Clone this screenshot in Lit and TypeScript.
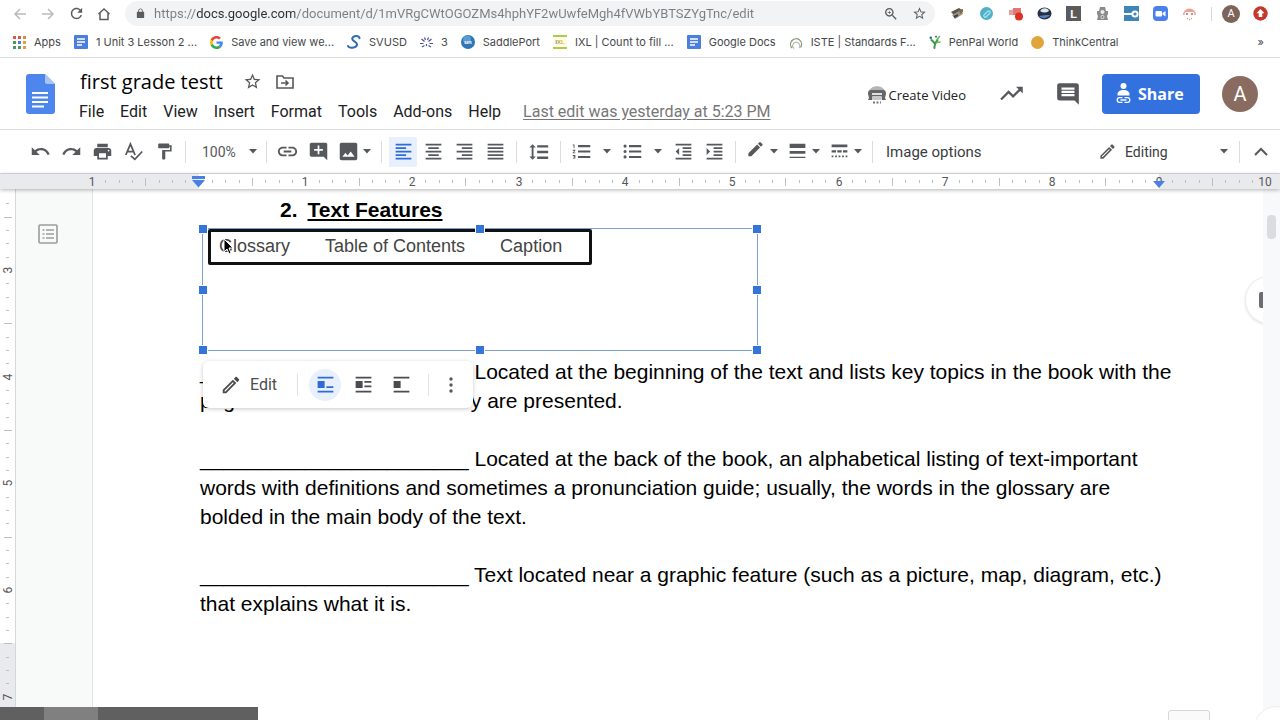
import { LitElement, html, svg, css } from "lit";
import { customElement } from "lit/decorators.js";

const P = {
  undo: "M12.5 8c-2.65 0-5.05.99-6.9 2.6L2 7v9h9l-3.62-3.62c1.39-1.16 3.16-1.88 5.12-1.88 3.54 0 6.55 2.31 7.6 5.5l2.37-.78C21.08 11.03 17.15 8 12.5 8z",
  redo: "M18.4 10.6C16.55 8.99 14.15 8 11.5 8c-4.65 0-8.58 3.03-9.96 7.22L3.9 16c1.05-3.19 4.05-5.5 7.6-5.5 1.95 0 3.73.72 5.12 1.88L13 16h9V7l-3.6 3.6z",
  print: "M19 8H5c-1.66 0-3 1.34-3 3v6h4v4h12v-4h4v-6c0-1.66-1.34-3-3-3zm-3 11H8v-5h8v5zm3-7c-.55 0-1-.45-1-1s.45-1 1-1 1 .45 1 1-.45 1-1 1zm-1-9H6v4h12V3z",
  paint: "M18 4V3c0-.55-.45-1-1-1H5c-.55 0-1 .45-1 1v4c0 .55.45 1 1 1h12c.55 0 1-.45 1-1V6h1v4H9v11c0 .55.45 1 1 1h2c.55 0 1-.45 1-1v-9h8V4h-3z",
  link: "M3.9 12c0-1.71 1.39-3.1 3.1-3.1h4V7H7c-2.76 0-5 2.24-5 5s2.24 5 5 5h4v-1.9H7c-1.71 0-3.1-1.39-3.1-3.1zM8 13h8v-2H8v2zm9-6h-4v1.9h4c1.71 0 3.1 1.39 3.1 3.1s-1.39 3.1-3.1 3.1h-4V17h4c2.76 0 5-2.24 5-5s-2.24-5-5-5z",
  addComment: "M22 4c0-1.100-.9-2-2-2H4c-1.100 0-2 .9-2 2v12c0 1.100.9 2 2 2h14l4 4V4zM17 11h-4v4h-2v-4H7V9h4V5h2v4h4v2z",
  image: "M22 20V4c0-1.100-.9-2-2-2H4c-1.100 0-2 .9-2 2v16c0 1.100.9 2 2 2h16c1.100 0 2-.9 2-2zM8.500 13.500l2.500 3.010L14.500 12l4.500 6H5l3.500-4.500z",
  alignLeft: "M3 3h18v2H3zM3 7h12v2H3zM3 11h18v2H3zM3 15h12v2H3zM3 19h18v2H3z",
  alignCenter: "M3 3h18v2H3zM6 7h12v2H6zM3 11h18v2H3zM6 15h12v2H6zM3 19h18v2H3z",
  alignRight: "M3 3h18v2H3zM9 7h12v2H9zM3 11h18v2H3zM9 15h12v2H9zM3 19h18v2H3z",
  justify: "M3 3h18v2H3zM3 7h18v2H3zM3 11h18v2H3zM3 15h18v2H3zM3 19h18v2H3z",
  spacing: "M6 7h2.500L5 3.500 1.500 7H4v10H1.500L5 20.500 8.500 17H6V7zm4-2.500v2.500h12V4.500H10zm0 15h12V17H10v2.500zm0-6.250h12v-2.500H10v2.500z",
  numbered: "M2 17h2v.5H3v1h1v.5H2v1h3v-4H2v1zm1-9h1V4H2v1h1v3zm-1 3h1.800L2 13.100v.9h3v-1H3.200L5 10.900V10H2v1zM8 4.500V7h14V4.500H8zm0 15h14V17H8v2.500zm0-6.250h14v-2.500H8v2.500z",
  bullets: "M3.500 10.200a1.800 1.800 0 1 0 0 3.600 1.800 1.800 0 0 0 0-3.600zm0-6.200a1.800 1.800 0 1 0 0 3.600 1.800 1.800 0 0 0 0-3.600zm0 12.400a1.800 1.800 0 1 0 0 3.600 1.800 1.800 0 0 0 0-3.600zM8 19.500h14V17H8v2.500zm0-6.250h14v-2.500H8v2.500zM8 4.500V7h14V4.500H8z",
  outdent: "M11 17h10v-2H11v2zm-8-5l4 4V8l-4 4zm0 9h18v-2H3v2zM3 3v2h18V3H3zm8 6h10V7H11v2zm0 4h10v-2H11v2z",
  indent: "M3 21h18v-2H3v2zM3 8v8l4-4-4-4zm8 9h10v-2H11v2zM3 3v2h18V3H3zm8 6h10V7H11v2zm0 4h10v-2H11v2z",
  pencil: "M3 14.250V18h3.750L17.810 6.940l-3.750-3.750L3 14.250zM20.710 4.040c.39-.39.39-1.020 0-1.410l-2.340-2.340c-.39-.39-1.020-.39-1.410 0l-1.830 1.830 3.750 3.750 1.830-1.830z",
  weight: "M3 3h18v5H3zM3 11.500h18v3H3zM3 18h18v1.500H3z",
  dash: "M3 4h18v3H3zM3 10.500h5v2.500H3zM9.500 10.500h5v2.500h-5zM16 10.500h5v2.500h-5zM3 16.500h2v2H3zM7 16.500h2v2H7zM11 16.500h2v2h-2zM15 16.500h2v2h-2zM19 16.500h2v2h-2z",
  edit: "M14.060 9.020l.92.92L5.920 19H5v-.92l9.060-9.060M17.660 3c-.25 0-.51.1-.7.29l-1.830 1.830 3.750 3.750 1.830-1.830c.39-.39.39-1.020 0-1.410l-2.340-2.340c-.2-.2-.45-.29-.71-.29zm-3.600 3.190L3 17.250V21h3.750L17.810 9.940l-3.750-3.750z",
  star: "M22 9.240l-7.190-.62L12 2 9.190 8.630 2 9.240l5.460 4.730L5.820 21 12 17.270 18.180 21l-1.630-7.030L22 9.240zM12 15.400l-3.760 2.270 1-4.280-3.320-2.880 4.380-.38L12 6.100l1.710 4.040 4.380.38-3.320 2.880 1 4.280L12 15.400z",
  trend: "M16 6l2.290 2.290-4.880 4.880-4-4L2 16.590 3.410 18l6-6 4 4 6.300-6.290L22 12V6z",
  comment: "M22 4c0-1.100-.9-2-2-2H4c-1.100 0-2 .9-2 2v12c0 1.100.9 2 2 2h14l4 4V4zM18 14H6v-2h12v2zm0-3H6V9h12v2zm0-3H6V6h12v2z",
  reload: "M17.650 6.350C16.200 4.900 14.210 4 12 4c-4.420 0-7.990 3.580-7.990 8s3.570 8 7.990 8c3.730 0 6.840-2.550 7.730-6h-2.080c-.82 2.330-3.040 4-5.650 4-3.310 0-6-2.690-6-6s2.690-6 6-6c1.660 0 3.140.69 4.220 1.780L13 11h7V4l-2.350 2.350z",
  lock: "M18 8h-1V6c0-2.760-2.240-5-5-5S7 3.240 7 6v2H6c-1.100 0-2 .9-2 2v10c0 1.100.9 2 2 2h12c1.100 0 2-.9 2-2V10c0-1.100-.9-2-2-2zm-2.900 0H8.900V6c0-1.710 1.390-3.100 3.100-3.100 1.710 0 3.100 1.390 3.100 3.100v2z",
  zoom: "M15.500 14h-.79l-.28-.27C15.410 12.590 16 11.110 16 9.500 16 5.910 13.090 3 9.500 3S3 5.910 3 9.500 5.910 16 9.500 16c1.610 0 3.090-.59 4.230-1.570l.27.28v.79l5 4.990L20.490 19l-4.990-5zm-6 0C7.010 14 5 11.990 5 9.500S7.010 5 9.500 5 14 7.010 14 9.500 11.990 14 9.500 14zm2.500-4h-2v2H9v-2H7V9h2V7h1v2h2v1z",
  wrapInline: "M3 3h18v2H3zM3 8h8v8H3zM13 14h8v2h-8zM3 19h18v2H3z",
  wrapText: "M3 3h18v2H3zM3 8h8v8H3zM13 8h8v2h-8zM13 13h8v2h-8zM3 19h18v2H3z",
  wrapBreak: "M3 3h18v2H3zM3 8h8v8H3zM3 19h18v2H3z",
};

const icon = (d: string, size = 21) =>
  html`<svg width=${size} height=${size} viewBox="0 0 24 24" fill="currentColor" aria-hidden="true"><path d=${d}></path></svg>`;
const caret = html`<svg width="8" height="5" viewBox="0 0 8 5" fill="currentColor" aria-hidden="true"><path d="M0 0h8L4 4.500z"></path></svg>`;
const spell = html`<svg width="21" height="21" viewBox="0 0 24 24" fill="none" stroke="currentColor" stroke-width="2" aria-hidden="true"><path d="M3.200 16L8.500 3.500 13.800 16M5 12h7M9 17l4.500 4L22 12"></path></svg>`;

const docsIcon = html`<svg width="14" height="14" viewBox="0 0 14 14"><rect width="14" height="14" rx="1" fill="#4a7fe0"></rect><path d="M3 4h8M3 7h8M3 10h5" stroke="#fff" stroke-width="1.500"></path></svg>`;
const appsIcon = html`<svg width="13" height="13" viewBox="0 0 13 13">${[
  ["#d9584a", 0, 0], ["#d9584a", 5, 0], ["#d98b4a", 10, 0],
  ["#4d9a5f", 0, 5], ["#4a7fe0", 5, 5], ["#e0a03c", 10, 5],
  ["#4d9a5f", 0, 10], ["#4d9a5f", 5, 10], ["#e0a03c", 10, 10],
].map(([c, x, y]) => svg`<rect x=${x} y=${y} width="3" height="3" fill=${c}></rect>`)}</svg>`;
const gIcon = html`<svg width="13" height="13" viewBox="0 0 48 48"><path fill="#EA4335" d="M24 9.500c3.540 0 6.710 1.220 9.210 3.600l6.850-6.850C35.900 2.380 30.470 0 24 0 14.620 0 6.510 5.380 2.560 13.220l7.980 6.190C12.430 13.720 17.740 9.500 24 9.500z"></path><path fill="#4285F4" d="M46.980 24.550c0-1.570-.15-3.090-.38-4.550H24v9.020h12.940c-.58 2.960-2.260 5.480-4.780 7.180l7.730 6c4.510-4.180 7.090-10.360 7.090-17.650z"></path><path fill="#FBBC05" d="M10.530 28.590c-.48-1.450-.76-2.990-.76-4.590s.27-3.140.76-4.590l-7.980-6.190C.92 16.460 0 20.120 0 24c0 3.880.92 7.540 2.560 10.780l7.970-6.190z"></path><path fill="#34A853" d="M24 48c6.480 0 11.930-2.130 15.890-5.810l-7.730-6c-2.150 1.450-4.920 2.300-8.160 2.300-6.260 0-11.570-4.220-13.470-9.910l-7.980 6.190C6.510 42.620 14.620 48 24 48z"></path></svg>`;
const sIcon = html`<svg width="14" height="14" viewBox="0 0 14 14" fill="none" stroke="#2f6cb3" stroke-linecap="round"><path d="M12.500 3.200C12.600.3 6 .2 5.200 3.600 4.700 6 10.600 6.800 10 9.800 9.300 13.300 2 13.700 1 11" stroke-width="2"></path></svg>`;
const loomIcon = html`<svg width="13" height="13" viewBox="0 0 13 13" fill="none" stroke="#4a4f9c" stroke-width="1.200"><path d="M0 7.500h3.500M9.500 7.500H13M1.500 3l3 2.500M11.500 3l-3 2.500M4.500 1.500l1 2.500M8.500 1.500l-1 2.500M2 11l2.500-1.500M11 11L8.500 9.500M6.500 8v2"></path></svg>`;
const saddleIcon = html`<svg width="14" height="14" viewBox="0 0 14 14"><circle cx="7" cy="7" r="7" fill="#2f76b5"></circle><circle cx="6" cy="4.500" r="4" fill="#5a9bd0"></circle><text class="tiny" x="7" y="9" text-anchor="middle" fill="#fff">un</text></svg>`;
const ixlIcon = html`<svg width="14" height="14" viewBox="0 0 14 14"><rect width="14" height="14" fill="#fdfbe8"></rect><path d="M0 1h14M0 13h14" stroke="#a9cf4a" stroke-width="2"></path><text class="tiny" x="7" y="9" text-anchor="middle"><tspan fill="#3a9fd0">I</tspan><tspan fill="#e8952f">X</tspan><tspan fill="#e0b52f">L</tspan></text></svg>`;
const isteIcon = html`<svg width="14" height="14" viewBox="0 0 14 14" fill="none"><path d="M3 13A5.500 5.500 0 1 1 11.500 12.500" stroke="#8d9a7d" stroke-width="1.300"></path><path d="M5 13.500A3.500 3.500 0 1 1 10 13" stroke="#b5bda8" stroke-width="1.200"></path></svg>`;
const penIcon = html`<svg width="12" height="14" viewBox="0 0 12 14" fill="none" stroke-linecap="round"><path d="M5.500 13c-.5-3 .5-5 3-8M5.500 8L2.500 5" stroke="#3f9a4c" stroke-width="2"></path><path d="M8 4.500L10.500 1.500M8 7.500l3-.5" stroke="#69b85a" stroke-width="1.600"></path><circle cx="1.800" cy="2.800" r="1.300" fill="#2c6f9c"></circle><circle cx="7" cy="1.800" r="1" fill="#347d52"></circle></svg>`;
const thinkIcon = html`<svg width="13" height="13" viewBox="0 0 13 13"><circle cx="6.500" cy="6.500" r="6.500" fill="#e0a53a"></circle></svg>`;

const bookmarks = [
  { i: appsIcon, t: "Apps" },
  { i: docsIcon, t: "1 Unit 3 Lesson 2 ..." },
  { i: gIcon, t: "Save and view we..." },
  { i: sIcon, t: "SVUSD" },
  { i: loomIcon, t: "3" },
  { i: saddleIcon, t: "SaddlePort" },
  { i: ixlIcon, t: "IXL | Count to fill ..." },
  { i: docsIcon, t: "Google Docs" },
  { i: isteIcon, t: "ISTE | Standards F..." },
  { i: penIcon, t: "PenPal World" },
  { i: thinkIcon, t: "ThinkCentral" },
];

const ext = (label: string, body: unknown) =>
  html`<button class="ext" aria-label=${label}><svg width="15" height="15" viewBox="0 0 15 15">${body}</svg></button>`;

const extensions = [
  ext("Wallet", svg`<path d="M1 6l8-4 3 2-8 5z" fill="#5b554a"></path><path d="M2 9l9-5 2 4-8 5z" fill="#9a9288"></path><path d="M9 4l4-1v3l-3 2z" fill="#8a6a3c"></path><path d="M4 11l4-2" stroke="#3f444a" stroke-width="2"></path>`),
  ext("Clip", svg`<circle cx="7.500" cy="7.500" r="6.500" fill="#4fb0c8"></circle><path d="M5 9l4-4a1.500 1.500 0 0 1 2 2l-4 4a1.500 1.500 0 0 1-2-2" fill="none" stroke="#a5e2ee" stroke-width="1.300"></path>`),
  ext("Screen recorder", svg`<path d="M1 4h3l2-2v7H1z" fill="#e5a09c"></path><rect x="5" y="2" width="8" height="7" fill="#e27871"></rect><circle cx="11" cy="10.500" r="4" fill="#e02f24"></circle>`),
  ext("Globe", svg`<ellipse cx="7.500" cy="7.500" rx="7" ry="6" fill="#27303f"></ellipse><path d="M3 5c3-4 8-3 9 0-3 2-6 2-9 0z" fill="#dfe7ef"></path><path d="M2 10c3 3 8 3 11-1-4 0-6 0-11 1z" fill="#4b83c8"></path>`),
  ext("L", svg`<rect width="15" height="15" fill="#5b5b5b"></rect><text class="ell" x="7.500" y="11.500" text-anchor="middle" fill="#fff">L</text>`),
  ext("Robot", svg`<path d="M5 1h5l1 4h2v3l-1 2 1 4H2l1-4-1-2V5h2z" fill="#8b8b8b"></path><circle cx="7.500" cy="6" r="2" fill="#eee"></circle><circle cx="7.500" cy="11" r="2" fill="#ddd"></circle><circle cx="7.500" cy="11" r="1" fill="#777"></circle>`),
  ext("Key", svg`<rect width="15" height="15" fill="#3f86b8"></rect><path d="M0 8h9" stroke="#fff" stroke-width="2"></path><circle cx="11" cy="8" r="2.600" fill="none" stroke="#fff" stroke-width="2"></circle>`),
  ext("Video meeting", svg`<rect width="15" height="15" rx="4" fill="#4a80ee"></rect><rect x="2.500" y="5" width="6.500" height="5.500" rx="1" fill="#fff"></rect><path d="M9.500 7l3-2v5.500l-3-2z" fill="#fff"></path>`),
  ext("Screencast", svg`<path d="M1 9a6.500 6.500 0 1 1 13 0z" fill="#eaa395"></path><rect x="2.500" y="6" width="10" height="4" rx="2" fill="#fff"></rect><path d="M4 8h2M9 8h2" stroke="#b86b5e" stroke-width="1.500"></path><path d="M5 12.500h1M7 13.500h1M9 12.500h1" stroke="#e2998a" stroke-width="1.400"></path>`),
];

const INCH = 320 / 3;

const hTicks = () => {
  const out = [];
  for (let i = 0; i <= 88; i++) {
    const x = Math.round(92 + (i * INCH) / 8);
    const n = Math.abs(i / 8 - 1);
    if (i % 8 === 0) {
      if (n !== 0) out.push(svg`<text class="num" x=${x} y="12" text-anchor="middle">${n}</text>`);
    } else if (i % 4 === 0) out.push(svg`<rect x=${x} y="4" width="1" height="8" fill="#bcbfc3"></rect>`);
    else out.push(svg`<rect x=${x} y="6" width="1" height="3" fill="#bcbfc3"></rect>`);
  }
  return out;
};
const vTicks = () => {
  const out = [];
  for (let i = -5; i <= 34; i++) {
    const y = Math.round(81 + (i * INCH) / 8);
    if (i % 8 === 0) out.push(svg`<text class="num" transform=${`translate(12 ${y}) rotate(-90)`} text-anchor="middle">${3 + i / 8}</text>`);
    else if (i % 4 === 0) out.push(svg`<rect x="4" y=${y} width="8" height="1" fill="#bcbfc3"></rect>`);
    else out.push(svg`<rect x="6" y=${y} width="3" height="1" fill="#bcbfc3"></rect>`);
  }
  return out;
};

const tool = (label: string, d: string, size = 21) =>
  html`<button class="tool" aria-label=${label}>${icon(d, size)}</button>`;
const combo = (label: string, d: string, kind: string, size = 21) =>
  html`<button class="combo ${kind}" aria-label=${label}><span class="face">${icon(d, size)}</span><span class="drop">${caret}</span></button>`;
const sep = html`<span class="sep"></span>`;

const BLANK = "_".repeat(23);

@customElement("app-root")
export class AppRoot extends LitElement {
  static styles = css`
    :host { display: flex; flex-direction: column; height: 100vh; overflow: hidden; position: relative; background: #fff; color: #000; font-family: Roboto, "Liberation Sans", sans-serif; }
    * { box-sizing: border-box; }
    button, input, select { font: inherit; color: inherit; border: 0; background: none; padding: 0; margin: 0; outline: 0; }
    svg { display: block; flex: none; }
    .tiny { font: bold 6px "Liberation Sans", sans-serif; }
    .ell { font: bold 11px "Liberation Sans", sans-serif; }

    .nav { display: flex; align-items: center; height: 27px; padding: 0 12px 0 6px; flex: none; color: #5a5d60; }
    .navbtn { width: 28px; height: 24px; display: flex; align-items: center; justify-content: center; }
    .navbtn.off { color: #b9bbbd; }
    .omni { flex: 1; display: flex; align-items: center; gap: 8px; height: 25px; margin-left: 7px; padding: 0 6px 0 10px; border-radius: 13px; background: #f1f3f4; }
    .url { flex: 1; min-width: 0; height: 25px; font-size: 13px; color: transparent; background: linear-gradient(90deg, #7b7e81 42px, #2b2d30 42px, #2b2d30 141px, #7b7e81 141px); -webkit-background-clip: text; background-clip: text; }
    .omnibtn { width: 20px; height: 20px; display: flex; align-items: center; justify-content: center; }
    .omniend { display: flex; gap: 8px; }
    .exts { display: flex; align-items: center; margin-left: 8px; }
    .ext { width: 29px; height: 20px; display: flex; align-items: center; justify-content: center; }
    .navline { width: 1px; height: 14px; margin: 0 10px 0 7px; background: #d5d7d9; }
    .mini { width: 18px; height: 18px; border-radius: 50%; background: #7d6459; color: #fff; font-size: 11px; line-height: 18px; text-align: center; }
    .alert { margin-left: 13px; }

    .marks { display: flex; align-items: center; gap: 13px; height: 31px; padding: 0 16px 0 13px; flex: none; border-bottom: 1px solid #dcdcdc; font: 11px/16px Inter, sans-serif; color: #45484b; }
    .mark { display: flex; align-items: center; gap: 8px; color: inherit; text-decoration: none; white-space: nowrap; }
    .more { margin-left: auto; }

    .head { display: flex; align-items: center; height: 72px; padding: 0 22px 0 25px; flex: none; border-bottom: 1px solid #dadce0; }
    .logo { margin-top: 2px; }
    .titles { display: flex; flex-direction: column; margin-left: 24px; padding-top: 4px; gap: 4px; }
    .row1 { display: flex; align-items: center; gap: 14px; color: #5f6368; height: 28px; }
    .title { width: 150px; height: 28px; padding-left: 1px; font: 20px/28px "Open Sans", sans-serif; color: #000; }
    .plain { display: flex; align-items: center; justify-content: center; color: #56585b; }
    .row2 { display: flex; gap: 16px; align-items: center; height: 24px; font-size: 16px; line-height: 24px; color: #202124; }
    .last { margin-left: 6px; color: #777; text-decoration: underline; text-underline-offset: 2px; }
    .actions { display: flex; align-items: center; margin-left: auto; }
    .video { display: flex; align-items: center; gap: 2px; font: 500 13px/18px "Open Sans", sans-serif; color: #222; padding-top: 2px; }
    .trend { margin-left: 32px; }
    .talk { margin-left: 30px; }
    .share { display: flex; align-items: center; gap: 7px; width: 98px; height: 40px; margin-left: 21px; padding-left: 14px; border-radius: 4px; background: #3371df; color: #fff; font: 700 16px/20px "Open Sans", sans-serif; }
    .avatar { width: 36px; height: 36px; margin-left: 22px; border-radius: 50%; background: #8a6b60; color: #fff; font-size: 20px; line-height: 36px; text-align: center; }

    .tools { display: flex; align-items: center; height: 44px; padding: 0 4px 0 25px; flex: none; border-bottom: 1px solid #dadce0; color: #56585b; font-size: 14px; }
    .tool { width: 31px; height: 30px; display: flex; align-items: center; justify-content: center; }
    .tool.on { color: #2f6bd8; background: #e8f0fe; border-radius: 2px; background-clip: padding-box; border: solid transparent; border-width: 0 1px 0 2px; }
    .tool.space { width: 33px; }
    .combo { display: flex; align-items: center; height: 30px; }
    .face, .drop { display: flex; justify-content: center; }
    .combo.slim { padding: 0 3px 0 1px; }
    .slim .face { width: 26px; }
    .slim .drop { width: 12px; }
    .wide .face { width: 31px; }
    .wide .drop { width: 20px; }
    .sep { width: 1px; height: 22px; margin: 0 5px; background: #dadce0; flex: none; }
    .zoom { display: flex; align-items: center; width: 70px; padding-left: 11px; }
    .zoom select { appearance: none; width: 47px; height: 30px; }
    .options { padding: 0 8px; height: 30px; font-size: 15px; color: #3a3c3f; white-space: nowrap; }
    .mode { display: flex; align-items: center; gap: 8px; margin-left: auto; padding-right: 6px; }
    .mode select { appearance: none; width: 87px; height: 30px; color: #3a3c3f; }

    .hruler { height: 15px; flex: none; position: relative; z-index: 2; background: #fff; box-shadow: 0 1px 4px rgba(0, 0, 0, 0.3); }
    .hruler svg { width: 100%; height: 15px; }
    .num { font: 12px Roboto, sans-serif; fill: #55585b; }

    .work { flex: 1; min-height: 0; display: flex; overflow: hidden; position: relative; }
    .vruler { width: 16px; flex: none; border-right: 1px solid #d5d7d9; }
    .vruler svg { height: 100%; width: 15px; }
    .side { width: 77px; flex: none; background: #f8faf9; border-right: 1px solid #e3e5e5; padding: 35px 0 0 22px; color: #9a9c9e; }
    .page { flex: 1; min-width: 0; position: relative; padding: 6px 87px 0 107px; font: 21px/29px "Liberation Sans", Arial, sans-serif; overflow: hidden; }
    .gutter { width: 17px; flex: none; background: #f8f9fa; padding: 26px 4px 0; }
    .thumb { display: block; height: 24px; border-radius: 4px; background: #dadce0; }
    h2 { display: flex; gap: 10px; margin: 0; padding-left: 80px; font-size: 21px; line-height: 29px; font-weight: 700; }
    h2 u { text-underline-offset: 2px; text-decoration-thickness: 2px; }
    p { margin: 0 0 29px; }
    .figure { position: relative; width: 556px; height: 123px; margin: 4px 0 6px 2px; border: 1px solid #7b9fd4; }
    .words { display: flex; align-items: center; gap: 35px; width: 384px; height: 36px; margin-left: 5px; padding: 0 8px 2px; border: 3px solid #111; border-radius: 2px; font-size: 18px; line-height: 20px; color: #444; white-space: nowrap; }
    .grip { position: absolute; width: 10px; height: 10px; margin: -5px; border: 1px solid #fff; background: #3574db; }
    .t { top: 0; } .m { top: 50%; } .b { top: 100%; }
    .l { left: 0; } .c { left: 50%; } .r { left: 100%; }
    .cursor { position: absolute; left: 20px; top: 9px; }
    .float { position: absolute; left: 110px; top: 172px; display: flex; align-items: center; width: 270px; height: 47px; padding-left: 17px; background: #fff; border-radius: 6px; box-shadow: 0 1px 4px rgba(0, 0, 0, 0.22); font: 16px/24px Roboto, sans-serif; color: #4a4c4f; }
    .fedit { display: flex; align-items: center; gap: 8px; width: 72px; }
    .fsep { width: 1px; height: 22px; background: #e0e2e4; margin: 0 11px 0 5px; }
    .fbtn { width: 32px; height: 32px; margin-right: 6px; border-radius: 50%; display: flex; align-items: center; justify-content: center; }
    .fbtn.on { background: #e8f0fe; color: #2f6bd8; }
    .dots { width: 22px; }
    .bubble { position: absolute; right: -30px; top: 87px; width: 48px; height: 48px; border-radius: 50%; background: #fff; border: 1px solid #eee; box-shadow: 0 1px 3px rgba(0, 0, 0, 0.12); display: flex; align-items: center; padding-left: 13px; }
    .bubble i { display: block; width: 16px; height: 16px; background: #6b6d70; border-radius: 2px; }
    .strip { position: absolute; left: 0; bottom: 0; z-index: 3; width: 258px; height: 13px; background: #606060; padding-left: 44px; }
    .strip i { display: block; width: 54px; height: 13px; background: #808080; }
    .tab { position: absolute; right: 70px; bottom: -20px; width: 42px; height: 30px; border: 1px solid #d5d7d9; border-radius: 3px; background: #fafafa; z-index: 3; }
    .explore { position: absolute; right: -21px; bottom: -34px; width: 48px; height: 48px; border: 1px solid #eceeee; border-radius: 50%; background: #fff; z-index: 3; }
  `;

  render() {
    return html`
      <nav class="nav">
        <button class="navbtn off" aria-label="Back"><svg width="14" height="14" viewBox="0 0 14 14" fill="none" stroke="currentColor" stroke-width="1.500"><path d="M13 7H2M7 2L2 7l5 5"></path></svg></button>
        <button class="navbtn off" aria-label="Forward"><svg width="14" height="14" viewBox="0 0 14 14" fill="none" stroke="currentColor" stroke-width="1.500"><path d="M1 7h11M7 2l5 5-5 5"></path></svg></button>
        <button class="navbtn" aria-label="Reload">${icon(P.reload, 17)}</button>
        <button class="navbtn" aria-label="Home"><svg width="14" height="14" viewBox="0 0 14 14" fill="none" stroke="currentColor" stroke-width="1.500"><path d="M1.500 7L7 2l5.500 5M3 6v6.500h8V6"></path></svg></button>
        <div class="omni">
          ${icon(P.lock, 11)}
          <input class="url" type="text" aria-label="Address" value="https://docs.google.com/document/d/1mVRgCWtOGOZMs4hphYF2wUwfeMgh4fVWbYBTSZYgTnc/edit" />
          <span class="omniend">
            <button class="omnibtn" aria-label="Zoom">${icon(P.zoom, 16)}</button>
            <button class="omnibtn" aria-label="Bookmark">${icon(P.star, 15)}</button>
          </span>
        </div>
        <div class="exts">${extensions}</div>
        <span class="navline"></span>
        <button class="mini" aria-label="Profile">A</button>
        <button class="alert" aria-label="Update"><svg width="15" height="15" viewBox="0 0 15 15"><circle cx="7.500" cy="7.500" r="7.200" fill="#c5362b"></circle><path d="M7.500 3l4 4.200H9.300V11H5.700V7.200H3.500z" fill="#fff"></path></svg></button>
      </nav>
      <nav class="marks">
        ${bookmarks.map((b) => html`<a class="mark" href="#">${b.i}<span>${b.t}</span></a>`)}
        <button class="more" aria-label="More bookmarks">»</button>
      </nav>

      <header class="head">
        <svg class="logo" width="30" height="41" viewBox="0 0 30 41" aria-hidden="true"><path d="M4 0h16l10 10v27a3 3 0 0 1-3 3H4a3 3 0 0 1-3-3V3a3 3 0 0 1 3-3z" fill="#4d86ec"></path><path d="M20 0l10 10H22a2 2 0 0 1-2-2z" fill="#a9c5f7"></path><path d="M7 19h16M7 23.500h16M7 28h16M7 32.500h12" stroke="#fff" stroke-width="2"></path></svg>
        <div class="titles">
          <div class="row1">
            <input class="title" type="text" aria-label="Document title" value="first grade testt" />
            <button class="plain" aria-label="Star">${icon(P.star, 19)}</button>
            <button class="plain" aria-label="Move"><svg width="18" height="16" viewBox="0 0 18 16" fill="none" stroke="currentColor" stroke-width="1.600"><path d="M1 2h5.500l1.500 2h9v10H1z"></path><path d="M5 9h7M9.500 6.500L12 9l-2.500 2.500"></path></svg></button>
          </div>
          <div class="row2">
            ${["File", "Edit", "View", "Insert", "Format", "Tools", "Add-ons", "Help"].map((m) => html`<button>${m}</button>`)}
            <a class="last" href="#">Last edit was yesterday at 5:23 PM</a>
          </div>
        </div>
        <div class="actions">
          <button class="video"><svg width="20" height="18" viewBox="0 0 20 18"><path d="M1 8C2-2.500 18-2.500 19 8z" fill="#b5b5b5"></path><path d="M1 8c0-4 2-4 4-4h10c2 0 4 0 4 4l-1 4 1 2h-4v-3H5v3H1l1-2z" fill="#666"></path><path d="M5 7h10v2H5z" fill="#e2e2e2"></path><rect x="5" y="10" width="10" height="4" rx="1" fill="#c9c9c9"></rect><path d="M6 16.500h2M9.500 16.500h2M13 16.500h1" stroke="#777" stroke-width="2"></path></svg><span>Create Video</span></button>
          <button class="plain trend" aria-label="Activity">${icon(P.trend, 27)}</button>
          <button class="plain talk" aria-label="Comments">${icon(P.comment, 26)}</button>
          <button class="share"><svg width="15" height="21" viewBox="0 0 15 21" fill="#fff"><circle cx="7.500" cy="3" r="3"></circle><path d="M1.500 12.500V11c0-2.500 3-4 6-4s6 1.500 6 4v1.500z"></path><path d="M6.500 14.700h-3a2.300 2.300 0 0 0 0 4.600h3M8.500 14.700h3a2.300 2.300 0 0 1 0 4.600h-3M4.500 17h6" fill="none" stroke="#fff" stroke-width="1.300"></path></svg><span>Share</span></button>
          <button class="avatar" aria-label="Account">A</button>
        </div>
      </header>

      <div class="tools">
        ${tool("Undo", P.undo)}${tool("Redo", P.redo)}${tool("Print", P.print)}
        <button class="tool" aria-label="Spelling">${spell}</button>
        ${tool("Paint format", P.paint, 19)}${sep}
        <label class="zoom"><select aria-label="Zoom"><option>100%</option></select>${caret}</label>${sep}
        ${tool("Insert link", P.link, 23)}${tool("Add comment", P.addComment)}${combo("Insert image", P.image, "slim")}${sep}
        <button class="tool on" aria-label="Left align">${icon(P.alignLeft)}</button>
        ${tool("Center align", P.alignCenter)}${tool("Right align", P.alignRight)}${tool("Justify", P.justify)}${sep}
        <button class="tool space" aria-label="Line spacing">${icon(P.spacing, 22)}</button>${sep}
        ${combo("Numbered list", P.numbered, "wide")}${combo("Bulleted list", P.bullets, "wide")}
        ${tool("Decrease indent", P.outdent)}${tool("Increase indent", P.indent)}${sep}
        ${combo("Border color", P.pencil, "slim", 19)}${combo("Border weight", P.weight, "slim")}${combo("Border dash", P.dash, "slim")}${sep}
        <button class="options">Image options</button>
        <label class="mode">${icon(P.edit, 19)}<select aria-label="Mode"><option>Editing</option></select>${caret}</label>${sep}
        <button class="tool" aria-label="Hide menus"><svg width="14" height="9" viewBox="0 0 14 9" fill="none" stroke="currentColor" stroke-width="2"><path d="M1 8l6-6 6 6"></path></svg></button>
      </div>

      <div class="hruler"><svg aria-hidden="true">
        <rect width="199" height="15" fill="#e8eaed"></rect><rect x="1159" width="100%" height="15" fill="#e8eaed"></rect>
        ${hTicks()}
        <path d="M192 2h13v3h-13zM192 6h13l-6.500 7.500z" fill="#4a7fe3"></path><path d="M1153 7h12l-6 7z" fill="#4a7fe3"></path>
      </svg></div>

      <main class="work">
        <div class="vruler"><svg aria-hidden="true"><rect y="454" width="15" height="100%" fill="#e8eaed"></rect>${vTicks()}</svg></div>
        <aside class="side"><button aria-label="Document outline"><svg width="20" height="20" viewBox="0 0 20 20" fill="none" stroke="currentColor" stroke-width="1.600"><rect x="1" y="1" width="18" height="18" rx="1"></rect><path d="M4.500 6h2M8 6h8M4.500 10h2M8 10h8M4.500 14h2M8 14h8"></path></svg></button></aside>
        <article class="page">
          <h2><span>2.</span><u>Text Features</u></h2>
          <div class="figure">
            <div class="words"><span>Glossary</span><span>Table of Contents</span><span>Caption</span></div>
            ${["t l", "t c", "t r", "m l", "m r", "b l", "b c", "b r"].map((g) => html`<span class="grip ${g}"></span>`)}
            <svg class="cursor" width="11" height="18" viewBox="0 0 11 18"><path d="M1 1v13l3-3 2 5 2-1-2-5h4z" fill="#000" stroke="#fff" stroke-width="1"></path></svg>
          </div>
          <p>${BLANK} Located at the beginning of the text and lists key topics in the book with the page number in the order they are presented.</p>
          <p>${BLANK} Located at the back of the book, an alphabetical listing of text-important words with definitions and sometimes a pronunciation guide; usually, the words in the glossary are bolded in the main body of the text.</p>
          <p>${BLANK} Text located near a graphic feature (such as a picture, map, diagram, etc.) that explains what it is.</p>
          <div class="float">
            <button class="fedit">${icon(P.edit, 22)}<span>Edit</span></button>
            <span class="fsep"></span>
            <button class="fbtn on" aria-label="In line">${icon(P.wrapInline, 21)}</button>
            <button class="fbtn" aria-label="Wrap text">${icon(P.wrapText, 21)}</button>
            <button class="fbtn" aria-label="Break text">${icon(P.wrapBreak, 21)}</button>
            <span class="fsep"></span>
            <button class="plain dots" aria-label="More options"><svg width="4" height="16" viewBox="0 0 4 16" fill="currentColor"><circle cx="2" cy="2" r="1.700"></circle><circle cx="2" cy="8" r="1.700"></circle><circle cx="2" cy="14" r="1.700"></circle></svg></button>
          </div>
          <button class="bubble" aria-label="Add comment"><i></i></button>
        </article>
        <div class="gutter"><span class="thumb"></span></div>
      </main>
      <div class="strip"><i></i></div>
      <span class="tab"></span>
      <button class="explore" aria-label="Explore"></button>
    `;
  }
}
